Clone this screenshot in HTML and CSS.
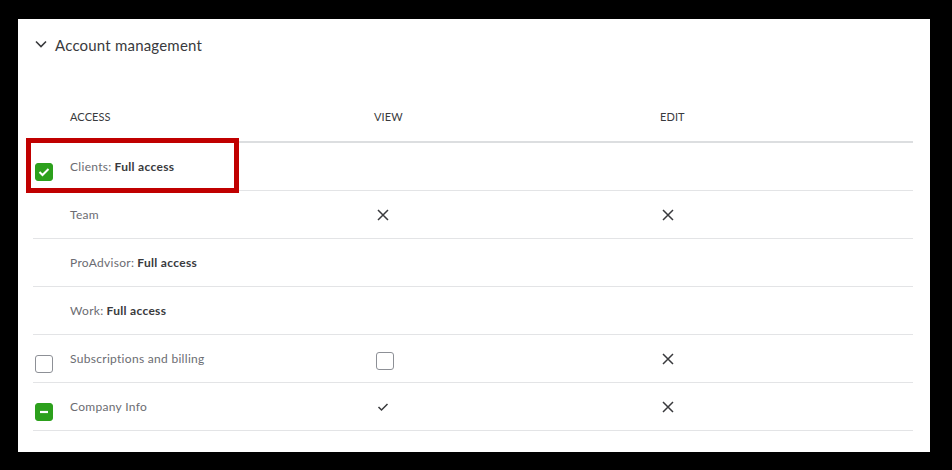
FILE: index.html
```html
<!DOCTYPE html>
<html lang="en">
<head>
    <meta charset="UTF-8">
    <meta name="viewport" content="width=device-width, initial-scale=1.0">
    <title>Account management</title>
    <link rel="stylesheet" href="styles.css">
</head>
<body>

    <div class="panel">
        <div class="section-title">
            <svg class="chevron" width="12" height="8" viewBox="0 0 12 8">
                <path d="M1 1.5 L6 6.5 L11 1.5" fill="none" stroke="#393a3d" stroke-width="1.6"/>
            </svg>
            <span>Account management</span>
        </div>

        <div class="perm-table">
            <div class="row head">
                <div class="cell check"></div>
                <div class="cell label">ACCESS</div>
                <div class="cell view">VIEW</div>
                <div class="cell edit">EDIT</div>
            </div>

            <div class="row">
                <div class="cell check"><span class="box on">
                    <svg width="12" height="10" viewBox="0 0 12 10"><path d="M1.5 5 L4.5 8 L10.5 2" fill="none" stroke="#fff" stroke-width="2"/></svg>
                </span></div>
                <div class="cell label">Clients: <b>Full access</b></div>
                <div class="cell view"></div>
                <div class="cell edit"></div>
            </div>

            <div class="row">
                <div class="cell check"></div>
                <div class="cell label">Team</div>
                <div class="cell view"><svg class="x" width="12" height="12" viewBox="0 0 12 12"><path d="M1 1 L11 11 M11 1 L1 11" stroke="#393a3d" stroke-width="1.5"/></svg></div>
                <div class="cell edit"><svg class="x" width="12" height="12" viewBox="0 0 12 12"><path d="M1 1 L11 11 M11 1 L1 11" stroke="#393a3d" stroke-width="1.5"/></svg></div>
            </div>

            <div class="row">
                <div class="cell check"></div>
                <div class="cell label">ProAdvisor: <b>Full access</b></div>
                <div class="cell view"></div>
                <div class="cell edit"></div>
            </div>

            <div class="row">
                <div class="cell check"></div>
                <div class="cell label">Work: <b>Full access</b></div>
                <div class="cell view"></div>
                <div class="cell edit"></div>
            </div>

            <div class="row">
                <div class="cell check"><span class="box"></span></div>
                <div class="cell label">Subscriptions and billing</div>
                <div class="cell view"><span class="box small-shift"></span></div>
                <div class="cell edit"><svg class="x" width="12" height="12" viewBox="0 0 12 12"><path d="M1 1 L11 11 M11 1 L1 11" stroke="#393a3d" stroke-width="1.5"/></svg></div>
            </div>

            <div class="row">
                <div class="cell check"><span class="box on">
                    <svg width="12" height="10" viewBox="0 0 12 10"><path d="M2 5 L10 5" stroke="#fff" stroke-width="2.2"/></svg>
                </span></div>
                <div class="cell label">Company Info</div>
                <div class="cell view"><svg class="tick" width="12" height="10" viewBox="0 0 12 10"><path d="M1.5 5 L4.5 8 L10.5 2" fill="none" stroke="#393a3d" stroke-width="1.5"/></svg></div>
                <div class="cell edit"><svg class="x" width="12" height="12" viewBox="0 0 12 12"><path d="M1 1 L11 11 M11 1 L1 11" stroke="#393a3d" stroke-width="1.5"/></svg></div>
            </div>
        </div>

        <!-- highlight drawn over the first row -->
        <div class="highlight"></div>
    </div>

</body>
</html>
```

FILE: styles.css
```css
body {
    margin: 0;
    background-color: #000;
    font-family: Lato, "Liberation Sans", sans-serif;
    color: #393a3d;
    padding: 19px 22px 18px 18px;
}
.panel {
    position: relative;
    background-color: #fff;
    height: 433px;
}
.section-title {
    display: flex;
    align-items: center;
    height: 52px;
    padding-left: 17px;
    font-size: 15px;
    letter-spacing: 0.2px;
    color: #393a3d;
}
.chevron {
    margin-right: 8px;
    margin-top: -3px;
}
.perm-table {
    margin-left: 15px;
    margin-right: 17px;
}
.row {
    display: grid;
    grid-template-columns: 37px 304px 286px 1fr;
    height: 47px;
    border-bottom: 1px solid #e3e4e6;
    font-size: 12px;
    letter-spacing: 0.3px;
    color: #6b6c72;
}
.row.head {
    height: 70px;
    border-bottom: 2px solid #dcdee0;
    font-size: 11px;
    letter-spacing: 0.1px;
    color: #393a3d;
}
.cell {
    display: flex;
    align-items: center;
}
.head .cell {
    align-items: flex-end;
    padding-bottom: 17px;
    line-height: 14px;
}
.label b {
    font-weight: 700;
    color: #393a3d;
    margin-left: 3px;
}
.check {
    padding-left: 2px;
}
.box {
    display: flex;
    align-items: center;
    justify-content: center;
    box-sizing: border-box;
    width: 18px;
    height: 18px;
    border: 1px solid #8d9096;
    border-radius: 3px;
    margin-top: 11px;
}
.box.on {
    background-color: #2ca01c;
    border-color: #2ca01c;
}
.box.small-shift {
    margin-top: 4px;
    margin-left: 2px;
}
.view .x, .view .tick {
    margin-left: 3px;
}
.edit .x {
    margin-left: 2px;
}
.highlight {
    position: absolute;
    left: 8px;
    top: 119px;
    width: 203px;
    height: 45px;
    border: 5px solid #c00000;
}
```
